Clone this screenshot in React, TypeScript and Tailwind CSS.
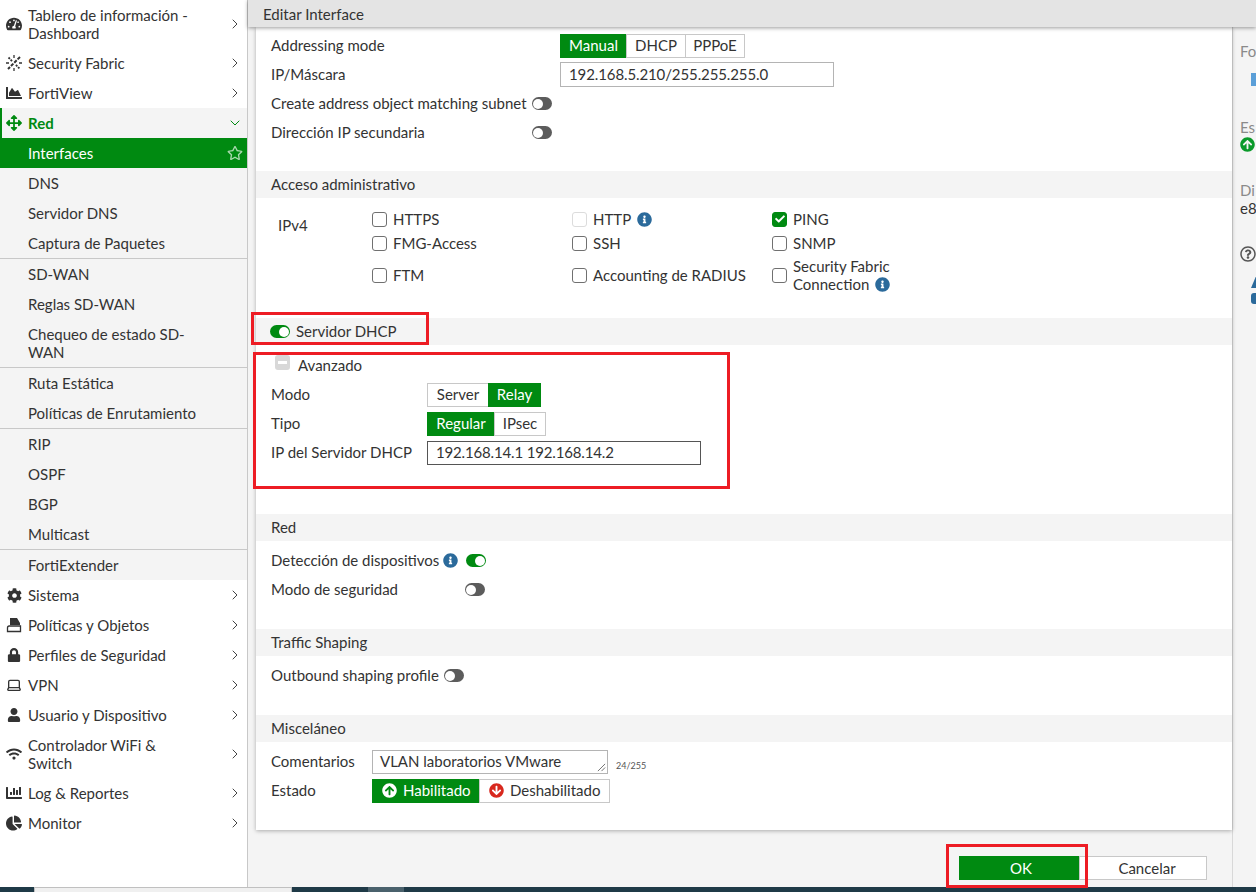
import type { ReactNode } from 'react';
import { FaArrowCircleDown, FaArrowCircleUp, FaArrowsAlt, FaChartArea, FaChartBar, FaChartPie, FaCog, FaInfoCircle, FaLock, FaRegStar, FaTachometerAlt, FaUser, FaWifi, FaCheck, FaRegQuestionCircle } from 'react-icons/fa';
import { LuChevronDown, LuChevronRight, LuLaptop } from 'react-icons/lu';

function FabricIcon() {
  return (
    <svg viewBox="0 0 16 16" className="h-4 w-4" fill="none" stroke="#333">
      <path d="M14 2L2 14" strokeWidth="2" strokeDasharray="3.4 1.3" />
      <path d="M2.5 2.5l3.6 3.6M9.9 9.9l3.6 3.6" strokeWidth="1.8" strokeDasharray="2 1" />
      <path d="M0 8h3M13 8h3M8 0v3M8 13v3" strokeWidth="1.3" />
    </svg>
  );
}

function PolicyIcon() {
  return (
    <svg viewBox="0 0 16 16" className="h-4 w-4" fill="#333">
      <path d="M4 1h7l3 5v2H4z" />
      <path d="M3.2 9h11.3v5.5H1.5V11c0-1 .7-2 1.7-2z" fill="#fff" stroke="#333" strokeWidth="1.3" />
    </svg>
  );
}

function MenuRow({ icon, label, open, active }: { icon?: ReactNode; label: string; open?: boolean; active?: boolean }) {
  return (
    <div className={`flex min-h-[30px] items-center pr-[4px] ${active ? 'border-l-2 border-[#008a11] bg-[#f4f4f4] pl-[2px] font-bold text-[#008a11]' : 'pl-[4px]'}`}>
      <span className="flex w-[24px] shrink-0 justify-center pr-[4px] text-[16px]">{icon}</span>
      <span className="max-w-[170px] leading-[18px]">{label}</span>
      {open ? <LuChevronDown strokeWidth={1.5} className="ml-auto h-4 w-4 text-[#008a11]" /> : <LuChevronRight strokeWidth={1.5} className="ml-auto h-4 w-4 text-[#444]" />}
    </div>
  );
}

function SubRow({ label, h = 'h-[30px]' }: { label: string; h?: string }) {
  return <div className={`flex items-center pl-[28px] pr-[40px] leading-[18px] ${h}`}>{label}</div>;
}

function Sidebar() {
  return (
    <aside className="w-[248px] shrink-0 border-r border-[#c8c8c8] bg-white text-[15px] text-[#333]">
      <div className="h-[48px] flex flex-col justify-center">
        <MenuRow icon={<FaTachometerAlt />} label="Tablero de información - Dashboard" />
      </div>
      <MenuRow icon={<FabricIcon />} label="Security Fabric" />
      <MenuRow icon={<FaChartArea />} label="FortiView" />
      <MenuRow icon={<FaArrowsAlt />} label="Red" open active />
      <div className="bg-[#f4f4f4]">
        <div className="flex h-[30px] items-center justify-between bg-[#008a11] pl-[28px] pr-[4px] text-white">
          <span>Interfaces</span>
          <FaRegStar className="h-4 w-4 text-[#a9d8ae]" />
        </div>
        <SubRow label="DNS" />
        <SubRow label="Servidor DNS" />
        <SubRow label="Captura de Paquetes" />
        <div className="border-t border-[#c8c8c8]">
          <SubRow label="SD-WAN" />
          <SubRow label="Reglas SD-WAN" />
          <SubRow label="Chequeo de estado SD-WAN" h="h-[48px]" />
        </div>
        <div className="border-t border-[#c8c8c8]">
          <SubRow label="Ruta Estática" />
          <SubRow label="Políticas de Enrutamiento" />
        </div>
        <div className="border-t border-[#c8c8c8]">
          <SubRow label="RIP" />
          <SubRow label="OSPF" />
          <SubRow label="BGP" />
          <SubRow label="Multicast" />
        </div>
        <div className="border-t border-[#c8c8c8]">
          <SubRow label="FortiExtender" />
        </div>
      </div>
      <MenuRow icon={<FaCog className="h-[15px] w-[15px]" />} label="Sistema" />
      <MenuRow icon={<PolicyIcon />} label="Políticas y Objetos" />
      <MenuRow icon={<FaLock className="h-[14px] w-[14px]" />} label="Perfiles de Seguridad" />
      <MenuRow icon={<LuLaptop />} label="VPN" />
      <MenuRow icon={<FaUser className="h-[14px] w-[14px]" />} label="Usuario y Dispositivo" />
      <div className="flex h-[48px] flex-col justify-center">
        <MenuRow icon={<FaWifi />} label="Controlador WiFi & Switch" />
      </div>
      <MenuRow icon={<FaChartBar />} label="Log & Reportes" />
      <MenuRow icon={<FaChartPie />} label="Monitor" />
    </aside>
  );
}

function Toggle({ on }: { on?: boolean }) {
  return (
    <span className={`flex h-[13px] w-[20px] shrink-0 items-center rounded-full px-[1px] ${on ? 'justify-end bg-[#008a11]' : 'justify-start bg-[#5c5c5c]'}`}>
      <span className="h-[10px] w-[10px] rounded-full bg-white" />
    </span>
  );
}

function Info() {
  return <FaInfoCircle className="h-[15px] w-[15px] shrink-0 text-[#2b6a9b]" />;
}

function SectionHead({ children }: { children: ReactNode }) {
  return <div className="flex h-[27px] items-center gap-[7px] bg-[#f4f4f4] pl-[15px]">{children}</div>;
}

function Row({ label, labelW, h = 'h-[29px]', children }: { label: string; labelW?: string; h?: string; children?: ReactNode }) {
  return (
    <div className={`flex items-center pl-[15px] ${h}`}>
      <span className={`shrink-0 ${labelW ?? ''}`}>{label}</span>
      {children}
    </div>
  );
}

function Seg({ items, active, widths }: { items: string[]; active: number; widths: string[] }) {
  return (
    <div className="flex h-[24px]">
      {items.map((item, i) => (
        <span
          key={item}
          className={`flex items-center justify-center ${widths[i]} ${i === active ? 'bg-[#008a11] text-white' : 'border border-[#c8c8c8] bg-white'} ${i > 0 ? '-ml-px' : ''}`}
        >
          {item}
        </span>
      ))}
    </div>
  );
}

function Check({ label, checked, disabled, info }: { label: ReactNode; checked?: boolean; disabled?: boolean; info?: boolean }) {
  return (
    <div className="flex items-center gap-[6px]">
      <span
        className={`flex h-[15px] w-[15px] shrink-0 items-center justify-center rounded-[3px] border ${
          checked ? 'border-[#008a11] bg-[#008a11]' : disabled ? 'border-[#dcdcdc] bg-white' : 'border-[#707070] bg-white'
        }`}
      >
        {checked && <FaCheck className="h-[10px] w-[10px] text-white" />}
      </span>
      <span className="leading-[18px]">{label}</span>
      {info && <Info />}
    </div>
  );
}

function Panel() {
  return (
    <div className="relative ml-[8px] h-[803px] w-[976px] bg-white shadow-[0_1px_4px_rgba(0,0,0,0.3)]">
      <div className="pt-[4px]">
        <Row label="Addressing mode" labelW="w-[289px]">
          <Seg items={['Manual', 'DHCP', 'PPPoE']} active={0} widths={['w-[67px]', 'w-[60px]', 'w-[60px]']} />
        </Row>
        <Row label="IP/Máscara" labelW="w-[289px]">
          <div className="flex h-[25px] w-[274px] items-center border border-[#b4b4b4] pl-[8px] tracking-[-0.11px]">192.168.5.210/255.255.255.0</div>
        </Row>
        <Row label="Create address object matching subnet">
          <span className="ml-[5px]"><Toggle /></span>
        </Row>
        <Row label="Dirección IP secundaria" labelW="w-[261px]">
          <Toggle />
        </Row>
      </div>
      <div className="mt-[24px]">
        <SectionHead>Acceso administrativo</SectionHead>
        <div className="flex pt-[9px]">
          <span className="w-[116px] shrink-0 pl-[22px] pt-[7px]">IPv4</span>
          <div className="grid grid-cols-[200px_200px_200px] grid-rows-[24px_24px_40px] items-center">
            <Check label="HTTPS" />
            <Check label="HTTP" disabled info />
            <Check label="PING" checked />
            <Check label="FMG-Access" />
            <Check label="SSH" />
            <Check label="SNMP" />
            <Check label="FTM" />
            <Check label="Accounting de RADIUS" />
            <div className="flex items-center gap-[6px]">
              <span className="h-[15px] w-[15px] shrink-0 rounded-[3px] border border-[#707070]" />
              <div className="leading-[18px]">
                <div>Security Fabric</div>
                <div className="flex items-center gap-[6px]">Connection <Info /></div>
              </div>
            </div>
          </div>
        </div>
      </div>
      <div className="mt-[23px]">
        <SectionHead><span className="-ml-px"><Toggle on /></span><span className="-ml-px">Servidor DHCP</span></SectionHead>
        <div className="flex h-[35px] items-center pl-[19px]">
          <span className="flex h-[15px] w-[15px] items-center justify-center rounded-[3px] bg-[#d8d8d8]">
            <span className="h-[3px] w-[9px] bg-white" />
          </span>
          <span className="ml-[8px] mt-[6px]">Avanzado</span>
        </div>
        <Row label="Modo" labelW="w-[156px]" h="h-[29px]">
          <Seg items={['Server', 'Relay']} active={1} widths={['w-[62px]', 'w-[53px]']} />
        </Row>
        <Row label="Tipo" labelW="w-[156px]">
          <Seg items={['Regular', 'IPsec']} active={0} widths={['w-[68px]', 'w-[52px]']} />
        </Row>
        <Row label="IP del Servidor DHCP" labelW="w-[156px]">
          <div className="flex h-[24px] w-[274px] items-center border border-[#555] pl-[8px] tracking-[-0.16px]">192.168.14.1 192.168.14.2</div>
        </Row>
      </div>
      <div className="mt-[47px]">
        <SectionHead>Red</SectionHead>
        <div className="pt-[5px]">
          <Row label="Detección de dispositivos">
            <span className="ml-[4px]"><Info /></span>
            <span className="ml-[8px]"><Toggle on /></span>
          </Row>
          <Row label="Modo de seguridad" labelW="w-[194px]">
            <Toggle />
          </Row>
        </div>
      </div>
      <div className="mt-[25px]">
        <SectionHead>Traffic Shaping</SectionHead>
        <div className="pt-[5px]">
          <Row label="Outbound shaping profile">
            <span className="ml-[5px]"><Toggle /></span>
          </Row>
        </div>
      </div>
      <div className="mt-[25px]">
        <SectionHead>Misceláneo</SectionHead>
        <div className="pt-[5px]">
          <Row label="Comentarios" labelW="w-[101px]">
            <div className="relative flex h-[24px] w-[236px] items-center border border-[#b4b4b4] pl-[7px]">
              VLAN laboratorios VMware
              <svg viewBox="0 0 10 10" className="absolute bottom-[1px] right-[1px] h-[9px] w-[9px]" stroke="#666" strokeWidth="1">
                <path d="M1 9L9 1M5 9L9 5" />
              </svg>
            </div>
            <span className="ml-[8px] mt-[8px] text-[9px] text-[#555]">24/255</span>
          </Row>
          <Row label="Estado" labelW="w-[101px]">
            <div className="flex h-[24px]">
              <span className="flex w-[107px] items-center gap-[6px] bg-[#008a11] pl-[10px] text-white">
                <FaArrowCircleUp className="h-[15px] w-[15px]" />Habilitado
              </span>
              <span className="flex w-[131px] items-center gap-[6px] border border-[#c8c8c8] pl-[9px]">
                <FaArrowCircleDown className="h-[15px] w-[15px] text-[#d8281e]" />Deshabilitado
              </span>
            </div>
          </Row>
        </div>
      </div>
      <div className="absolute left-[-5px] top-[285px] h-[33px] w-[178px] border-[3px] border-[#ed1c24]" />
      <div className="absolute left-[-3px] top-[325px] h-[137px] w-[477px] border-[3px] border-[#ed1c24]" />
    </div>
  );
}

function RightPanel() {
  return (
    <div className="h-[860px] w-[24px] shrink-0 overflow-hidden border-l border-[#d8d8d8] pl-[7px] text-[#8a8a8a]">
      <div className="w-[80px]">
        <div className="mt-[15px] leading-[18px]">Fo</div>
        <div className="ml-[11px] mt-[13px] h-[13px] w-[20px] bg-[#5b9fd8]" />
        <div className="mt-[32px] leading-[18px]">Es</div>
        <FaArrowCircleUp className="mt-[1px] h-[15px] w-[15px] text-[#0a9a2a]" />
        <div className="mt-[29px] leading-[18px]">Di</div>
        <div className="leading-[18px] text-[#333]">e8</div>
        <FaRegQuestionCircle className="mt-[29px] h-[16px] w-[16px] text-[#555]" />
        <div className="ml-[11px] mt-[12px] h-[14px] w-0 border-x-[6px] border-b-[14px] border-x-transparent border-b-[#2b6a9b]" />
        <div className="ml-[11px] mt-[5px] h-[11px] w-[14px] rounded-[3px] bg-[#2b6a9b]" />
      </div>
    </div>
  );
}

export default function App() {
  return (
    <div className="flex h-[892px] w-[1256px] flex-col overflow-hidden font-['Lato','Liberation_Sans',sans-serif] text-[15px] text-[#333]">
      <div className="flex h-[887px]">
        <Sidebar />
        <main className="relative flex-1 bg-[#f4f4f4]">
          <div className="relative z-10 flex h-[27px] items-center bg-[#e4e4e4] pl-[15px] pt-[1px] shadow-[0_1px_4px_rgba(0,0,0,0.4)]">Editar Interface</div>
          <div className="flex">
            <div className="w-[984px]">
              <Panel />
              <div className="mt-[26px] flex justify-end pr-[25px]">
                <button className="h-[24px] w-[120px] bg-[#008a11] pl-[4px] text-white">OK</button>
                <button className="h-[24px] w-[128px] border border-[#c8c8c8] bg-white pl-[8px]">Cancelar</button>
              </div>
            </div>
            <RightPanel />
          </div>
          <div className="absolute left-[698px] top-[844px] h-[44px] w-[142px] border-[3px] border-[#ed1c24]" />
        </main>
      </div>
      <div className="flex h-[5px] bg-[#1f3a47]">
        <div className="ml-[34px] w-[258px] border-x border-t border-[#c0c0c0] bg-[#f0f0f0]" />
        <div className="ml-[76px] w-[36px] bg-[#4a616c]" />
      </div>
    </div>
  );
}
